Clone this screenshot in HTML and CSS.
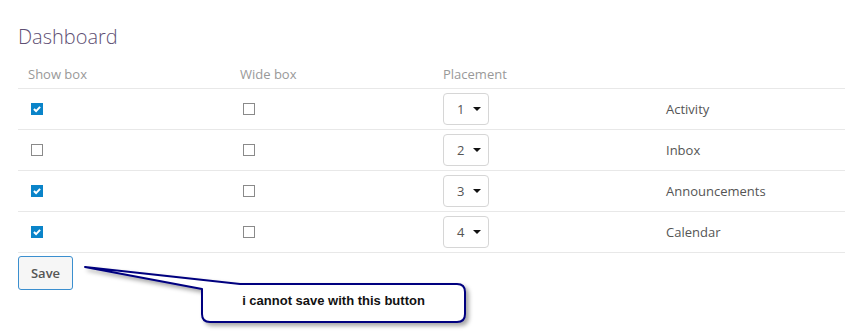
FILE: index.html
```html
<!DOCTYPE html>
<html lang="en">
<head>
    <meta charset="UTF-8">
    <title>Dashboard</title>
    <link rel="stylesheet" href="styles.css">
</head>
<body>
    <div class="page">
        <h1 class="page-title">Dashboard</h1>

        <table class="box-table">
            <thead>
                <tr>
                    <th class="col-show">Show box</th>
                    <th class="col-wide">Wide box</th>
                    <th class="col-place">Placement</th>
                    <th></th>
                </tr>
            </thead>
            <tbody>
                <tr>
                    <td><span class="check checked"><svg viewBox="0 0 12 12"><path d="M2.3 6 L4.9 8.5 L9.7 3.5" /></svg></span></td>
                    <td><span class="check"></span></td>
                    <td><div class="select">1 <span class="caret"></span></div></td>
                    <td class="box-name">Activity</td>
                </tr>
                <tr>
                    <td><span class="check"></span></td>
                    <td><span class="check"></span></td>
                    <td><div class="select">2 <span class="caret"></span></div></td>
                    <td class="box-name">Inbox</td>
                </tr>
                <tr>
                    <td><span class="check checked"><svg viewBox="0 0 12 12"><path d="M2.3 6 L4.9 8.5 L9.7 3.5" /></svg></span></td>
                    <td><span class="check"></span></td>
                    <td><div class="select">3 <span class="caret"></span></div></td>
                    <td class="box-name">Announcements</td>
                </tr>
                <tr>
                    <td><span class="check checked"><svg viewBox="0 0 12 12"><path d="M2.3 6 L4.9 8.5 L9.7 3.5" /></svg></span></td>
                    <td><span class="check"></span></td>
                    <td><div class="select">4 <span class="caret"></span></div></td>
                    <td class="box-name">Calendar</td>
                </tr>
            </tbody>
        </table>

        <button class="save-btn">Save</button>
    </div>

    <!-- annotation callout -->
    <div class="callout">
        <svg width="845" height="332" viewBox="0 0 845 332">
            <defs>
                <filter id="shadow" x="-10%" y="-30%" width="130%" height="180%">
                    <feDropShadow dx="3" dy="3" stdDeviation="2" flood-color="#000" flood-opacity="0.35" />
                </filter>
            </defs>
            <path class="bubble" filter="url(#shadow)"
                  d="M240 284 H457 Q465 284 465 292 V314 Q465 322 457 322 H210 Q202 322 202 314 V289 L85 267 Z" />
        </svg>
        <span class="callout-text">i cannot save with this button</span>
    </div>
</body>
</html>
```

FILE: styles.css
```css
* {
    box-sizing: border-box;
}

html,
body {
    height: 332px;
    overflow: hidden;
}

body {
    margin: 0;
    font-family: 'Open Sans', 'Noto Sans', Arial, sans-serif;
    font-size: 13px;
    color: #555;
    background: #fff;
    position: relative;
}

.page {
    padding: 25px 0 0 18px;
}

.page-title {
    margin: 0 0 12px;
    font-size: 20px;
    font-weight: 300;
    line-height: 24px;
    color: #5e4f73;
}

.box-table {
    width: 100%;
    border-collapse: collapse;
}

.box-table th {
    text-align: left;
    font-weight: 400;
    color: #999;
    padding: 0 10px;
    height: 27px;
    vertical-align: middle;
    border-bottom: 1px solid #e8e8e8;
}

.box-table td {
    padding: 0 10px;
    height: 41px;
    vertical-align: middle;
    border-bottom: 1px solid #e8e8e8;
}

.col-show {
    width: 212px;
}

.col-wide {
    width: 203px;
}

.col-place {
    width: 223px;
}

.check {
    display: block;
    width: 12px;
    height: 12px;
    margin: 1px 0 0 3px;
    border: 1px solid #8a8a8a;
    background: #fff;
}

.check.checked {
    background: #0a84c9;
    border-color: #0a84c9;
}

.check svg {
    display: block;
    width: 10px;
    height: 10px;
}

.check svg path {
    fill: none;
    stroke: #fff;
    stroke-width: 2.4;
}

.select {
    display: flex;
    align-items: center;
    width: 46px;
    height: 32px;
    padding-left: 13px;
    border: 1px solid #d6d6d6;
    border-radius: 4px;
    color: #555;
}

.caret {
    margin-left: 9px;
    width: 0;
    height: 0;
    border-left: 4px solid transparent;
    border-right: 4px solid transparent;
    border-top: 4px solid #111;
}

.box-name {
    color: #555;
}

.save-btn {
    margin-top: 3px;
    width: 55px;
    height: 34px;
    font-family: inherit;
    font-size: 13px;
    font-weight: 600;
    color: #555;
    background: #f6f6f6;
    border: 1px solid #3b8fcf;
    border-radius: 3px;
}

/* annotation overlay */
.callout {
    position: absolute;
    left: 0;
    top: 0;
    width: 845px;
    height: 332px;
    pointer-events: none;
}

.callout svg {
    display: block;
}

.bubble {
    fill: #fff;
    stroke: #00007f;
    stroke-width: 2;
    stroke-linejoin: round;
}

.callout-text {
    position: absolute;
    left: 202px;
    top: 293px;
    width: 263px;
    text-align: center;
    font-family: 'Liberation Sans', Arial, sans-serif;
    font-weight: 700;
    font-size: 13px;
    color: #111;
}
```
